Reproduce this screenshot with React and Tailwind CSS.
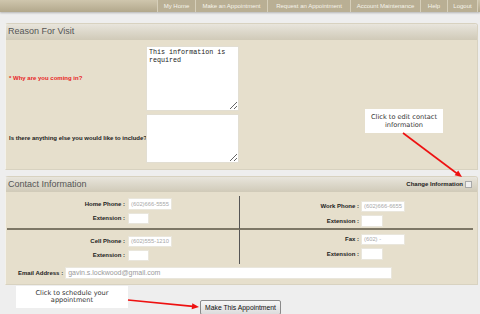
const tabs = [
  ["My Home", "w-[38px]"],
  ["Make an Appointment", "w-[72px]"],
  ["Request an Appointment", "w-[83px]"],
  ["Account Maintenance", "w-[70px]"],
  ["Help", "w-[27px]"],
  ["Logout", "w-[31px]"],
];

function Field({ w, h, value }) {
  return (
    <div
      className={`${w} ${h} bg-white border border-[#e9e6dc] flex items-center pl-[2px] text-[5.8px] text-[#a8a8a8] overflow-hidden whitespace-nowrap`}
    >
      {value}
    </div>
  );
}

function Label({ children }) {
  return (
    <div className="text-right font-bold text-[6px] text-[#222] whitespace-nowrap">{children}</div>
  );
}

export default function App() {
  return (
    <div className="relative w-[480px] h-[314px] overflow-hidden bg-[#eeeeee] font-['Liberation_Sans',Arial,sans-serif]">
      {/* Top nav */}
      <div className="h-[12px] bg-linear-to-b from-[#cfc6ad] to-[#b2a88c] shadow-[0_1px_2px_rgba(0,0,0,0.25)] flex justify-end pr-[2px]">
        {tabs.map(([t, w]) => (
          <div
            key={t}
            className={`${w} h-full flex items-center justify-center border-l border-[#d6cfba] last:border-r text-[6px] text-[#f6f3ea] bg-[#b9af94] whitespace-nowrap`}
          >
            {t}
          </div>
        ))}
      </div>

      {/* Reason For Visit panel */}
      <div className="mt-[11px] ml-[5px] w-[473px] rounded-t-[3px] border border-[#d8d2c0] border-l-[#f3f1ea]">
        <div className="h-[16px] rounded-t-[3px] bg-linear-to-b from-[#e8e5dc] to-[#d0cab8] flex items-center pl-[2px] text-[9px] text-[#555]">
          Reason For Visit
        </div>
        <div className="bg-[#e6dfcc] pt-[6px] pb-[6px] pl-[3px] grid grid-cols-[137px_93px] gap-y-[3px]">
          <div className="h-[65px] flex items-center font-bold text-[6px] text-[#e82424]">
            * Why are you coming in?
          </div>
          <textarea
            defaultValue={"This information is required"}
            className="h-[65px] w-[93px] bg-white border border-[#e2ded2] px-[2px] py-[1px] font-['Liberation_Mono',monospace] text-[6.7px] leading-[8px] text-[#222] outline-none"
          />
          <div className="h-[49px] flex items-center font-bold text-[6px] text-[#222] whitespace-nowrap">
            Is there anything else you would like to include?
          </div>
          <textarea
            defaultValue=""
            className="h-[49px] w-[93px] bg-white border border-[#e2ded2] outline-none"
          />
        </div>
      </div>

      {/* Contact Information panel */}
      <div className="mt-[6px] ml-[5px] w-[473px] rounded-t-[3px] border border-[#d8d2c0] border-l-[#f3f1ea]">
        <div className="h-[15px] rounded-t-[3px] bg-linear-to-b from-[#e8e5dc] to-[#d0cab8] flex items-center justify-between pl-[2px] pr-[5px]">
          <span className="text-[9px] text-[#555]">Contact Information</span>
          <div className="flex items-center gap-[2px]">
            <span className="font-bold text-[6px] text-[#222]">Change Information</span>
            <div className="w-[7px] h-[7px] border border-[#a9a9a9] bg-[#f0f0f0]" />
          </div>
        </div>
        <div className="bg-[#e6dfcc] pt-[4px] pb-[5px]">
          <div className="ml-[1px] mr-[4px] grid grid-cols-[233px_1fr]">
            {/* top left */}
            <div className="h-[34px] border-r border-r-[#555] border-b-2 border-b-[#7d7766] pt-[2px] pl-[1px]">
              <div className="grid grid-cols-[117px_auto] gap-x-[3px] gap-y-[3px] items-center">
                <Label>Home Phone :</Label>
                <Field w="w-[44px]" h="h-[12px]" value="(602)666-5555" />
                <Label>Extension :</Label>
                <Field w="w-[21px]" h="h-[11px]" value="" />
              </div>
            </div>
            {/* top right */}
            <div className="h-[34px] border-b-2 border-b-[#7d7766] pt-[5px]">
              <div className="grid grid-cols-[119px_auto] gap-x-[2px] gap-y-[3px] items-center">
                <Label>Work Phone :</Label>
                <Field w="w-[44px]" h="h-[11px]" value="(602)666-6655" />
                <Label>Extension :</Label>
                <Field w="w-[22px]" h="h-[12px]" value="" />
              </div>
            </div>
            {/* bottom left */}
            <div className="h-[34px] border-r border-r-[#555] pt-[6px] pl-[1px]">
              <div className="grid grid-cols-[117px_auto] gap-x-[3px] gap-y-[3px] items-center">
                <Label>Cell Phone :</Label>
                <Field w="w-[44px]" h="h-[11px]" value="(602)555-1210" />
                <Label>Extension :</Label>
                <Field w="w-[21px]" h="h-[11px]" value="" />
              </div>
            </div>
            {/* bottom right */}
            <div className="h-[34px] pt-[4px]">
              <div className="grid grid-cols-[119px_auto] gap-x-[2px] gap-y-[3px] items-center">
                <Label>Fax :</Label>
                <Field w="w-[44px]" h="h-[11px]" value="(602)    -" />
                <Label>Extension :</Label>
                <Field w="w-[22px]" h="h-[12px]" value="" />
              </div>
            </div>
          </div>
          <div className="mt-[3px] pl-[12px] flex items-center gap-[2px]">
            <Label>Email Address :</Label>
            <div className="w-[327px] h-[12px] bg-white border border-[#e9e6dc] flex items-center pl-[2px] text-[7px] text-[#9a9a9a]">
              gavin.s.lockwood@gmail.com
            </div>
          </div>
        </div>
      </div>

      {/* Bottom area */}
      <div className="flex items-start">
        <div className="ml-[16px] mt-[1px] w-[112px] h-[22px] bg-white flex flex-col items-center justify-center font-['DejaVu_Sans',sans-serif] text-[6.6px] leading-[7.5px] text-[#333]">
          <span>Click to schedule your</span>
          <span>appointment</span>
        </div>
        <button className="ml-[72px] mt-[15px] w-[81px] h-[15px] rounded-[2px] border border-[#8a8a8a] bg-linear-to-b from-[#f7f7f7] to-[#dcdcdc] text-[6.8px] text-[#111] flex items-start justify-center pt-[2px]">
          Make This Appointment
        </button>
      </div>

      {/* Callout over the reason panel */}
      <div className="absolute left-[365px] top-[109px] w-[78px] h-[24px] bg-white flex flex-col items-center justify-center font-['DejaVu_Sans',sans-serif] text-[6.6px] leading-[8px] text-[#333]">
        <span>Click to edit contact</span>
        <span>information</span>
      </div>

      {/* Annotation arrows */}
      <svg className="absolute left-0 top-0 pointer-events-none" width="480" height="314" viewBox="0 0 480 314">
        <line x1="403" y1="133" x2="457" y2="173.5" stroke="#ee1111" strokeWidth="1.6" />
        <polygon points="462,177 454.6,175.2 458.2,170.4" fill="#ee1111" />
        <line x1="128" y1="300" x2="193" y2="306.4" stroke="#ee1111" strokeWidth="1.6" />
        <polygon points="199,307 191.7,309.3 192.3,303.3" fill="#ee1111" />
      </svg>
    </div>
  );
}
